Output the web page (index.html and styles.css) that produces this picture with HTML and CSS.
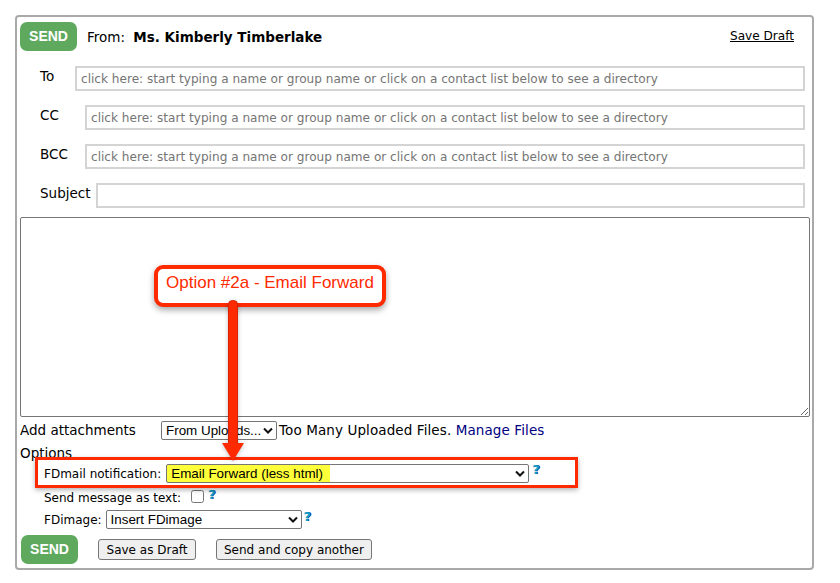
FILE: index.html
```html
<!DOCTYPE html>
<html lang="en">
<head>
<meta charset="utf-8">
<title>Compose</title>
<link rel="stylesheet" href="styles.css">
</head>
<body>
<form class="compose">
  <div class="top-row">
    <button type="button" class="send">SEND</button>
    <span class="from">From: <b>Ms. Kimberly Timberlake</b></span>
    <a class="save-link" href="#">Save Draft</a>
  </div>
  <div class="field field-to"><label>To</label><input type="text" placeholder="click here: start typing a name or group name or click on a contact list below to see a directory"></div>
  <div class="field field-cc"><label>CC</label><input type="text" placeholder="click here: start typing a name or group name or click on a contact list below to see a directory"></div>
  <div class="field field-cc"><label>BCC</label><input type="text" placeholder="click here: start typing a name or group name or click on a contact list below to see a directory"></div>
  <div class="field field-subject"><label>Subject</label><input type="text"></div>
  <textarea class="body-text"></textarea>
  <div class="attach-row">
    <span class="attach-label">Add attachments</span>
    <select class="sel sel-upload"><option>From Uploads...</option></select>
    <span class="attach-note">Too Many Uploaded Files. <a href="#">Manage Files</a></span>
  </div>
  <div class="options-title">Options</div>
  <div class="opt opt-notify">
    <span>FDmail notification:</span>
    <select class="sel sel-notify"><option>Email Forward (less html)</option></select>
    <span class="help help-notify">?</span>
  </div>
  <div class="opt opt-text">
    <span>Send message as text:</span>
    <input type="checkbox" class="check">
    <span class="help help-text">?</span>
  </div>
  <div class="opt opt-image">
    <span>FDimage:</span>
    <select class="sel sel-image"><option>Insert FDimage</option></select>
    <span class="help help-image">?</span>
  </div>
  <div class="bottom-row">
    <button type="button" class="send">SEND</button>
    <button type="button" class="plain plain-draft">Save as Draft</button>
    <button type="button" class="plain">Send and copy another</button>
  </div>
</form>

<div class="note-box"></div>
<div class="note-callout">Option #2a - Email Forward</div>
<svg class="note-arrow" width="40" height="170" viewBox="0 0 40 170" aria-hidden="true">
  <rect x="15.5" y="0.5" width="9" height="150" rx="4" fill="#ff2a00" stroke="#d82400" stroke-width="1"/>
  <path d="M9 143 L31 143 L20 161 Z" fill="#ff2a00"/>
</svg>
</body>
</html>
```
FILE: styles.css
```css
* { box-sizing: border-box; }
html, body { margin: 0; padding: 0; background: #fff; }
body {
  width: 840px;
  height: 583px;
  overflow: hidden;
  position: relative;
  font-family: "DejaVu Sans", Verdana, sans-serif;
  font-size: 14px;
  color: #000;
}
.compose {
  width: 799px;
  height: 555px;
  margin: 15px 0 0 15px;
  padding: 5px 3px 0 3px;
  border: 2px solid #a9a9a9;
  border-radius: 4px;
  display: flex;
  flex-direction: column;
  align-items: flex-start;
}
.top-row { display: flex; align-items: center; width: 774px; height: 29px; }
.send {
  width: 57px;
  height: 29px;
  padding: 0 0 1px;
  border: 0;
  border-radius: 7px;
  background: #5fa95f;
  color: #fff;
  font-family: "Liberation Sans", Arial, sans-serif;
  font-size: 14px;
  font-weight: 700;
}
.from { margin-left: 10px; font-size: 13.5px; }
.from b { margin-left: 4px; }
.save-link { margin-left: auto; padding-bottom: 2px; font-size: 12.1px; color: #000; }
.field { display: flex; align-items: flex-start; width: 785px; height: 25px; margin-top: 14px; padding-left: 20px; }
.field-to { margin-top: 15px; }
.field label { font-size: 13.5px; line-height: 20px; }
.field input {
  height: 25px;
  padding: 0 4px;
  border: 2px solid #d4d4d4;
  background: #fff;
  font-family: inherit;
  font-size: 12.1px;
  outline: 0;
}
.field input::placeholder { color: #757575; opacity: 1; }
.field-to input { width: 730px; margin-left: auto; }
.field-cc input { width: 720px; margin-left: auto; }
.field-subject input { width: 709px; margin-left: auto; }
.body-text {
  display: block;
  width: 790px;
  height: 200px;
  margin: 9px 0 0;
  border: 1px solid #767676;
  border-radius: 2px;
  resize: vertical;
  outline: 0;
}
.attach-row { display: flex; align-items: center; height: 19px; margin-top: 4px; white-space: nowrap; font-size: 13.5px; }
.attach-label { width: 141px; padding-bottom: 2px; }
.attach-note { margin-left: 2px; padding-bottom: 2px; letter-spacing: .1px; }
.attach-note a { color: #00007f; text-decoration: none; }
.sel {
  appearance: none;
  -webkit-appearance: none;
  height: 19px;
  padding: 0 0 0 4px;
  border: 1px solid #767676;
  border-radius: 2px;
  font-family: "Liberation Sans", Arial, sans-serif;
  font-size: 13.4px;
  line-height: 17px;
  color: #000;
  background-color: #fff;
  background-image: url("data:image/svg+xml,%3Csvg xmlns='http://www.w3.org/2000/svg' width='10' height='7'%3E%3Cpath d='M1 1.5L5 5.5L9 1.5' fill='none' stroke='%23111' stroke-width='2'/%3E%3C/svg%3E");
  background-repeat: no-repeat;
  background-position: right 3px center;
}
.sel-upload { width: 116px; }
.options-title { margin-top: 3px; height: 21px; line-height: 20px; font-size: 13.5px; }
.opt { display: flex; align-items: center; margin-left: 24px; white-space: nowrap; font-size: 12px; height: 19px; }
.opt-text { margin-top: 3px; height: 20px; }
.opt-image { margin-top: 4px; }
.opt-text span:first-child { padding-top: 4px; }
.sel-notify {
  width: 363px;
  margin-left: 5px;
  background-image:
    url("data:image/svg+xml,%3Csvg xmlns='http://www.w3.org/2000/svg' width='10' height='7'%3E%3Cpath d='M1 1.5L5 5.5L9 1.5' fill='none' stroke='%23111' stroke-width='2'/%3E%3C/svg%3E"),
    linear-gradient(#ffff3a, #ffff3a);
  background-position: right 3px center, 0 0;
  background-size: auto, 163px 100%;
}
.sel-image { width: 196px; margin-left: 4px; }
.check { width: 13px; height: 13px; margin: 0 0 0 10px; }
.help {
  align-self: flex-start;
  margin-left: 3px;
  font-family: "DejaVu Sans", sans-serif;
  font-size: 13px;
  font-weight: 700;
  line-height: 14px;
  color: #12a3c4;
  text-shadow: 1px 0 0 #2438a8;
}
.help-notify { margin-top: -1px; }
.help-text { margin-top: 2px; margin-left: 4px; }
.help-image { margin-top: 0; margin-left: 2px; }
.bottom-row { display: flex; align-items: center; height: 29px; margin-top: 6px; margin-left: 1px; }
.plain {
  height: 21px;
  padding: 0 7px;
  border: 1px solid #767676;
  border-radius: 3px;
  background: #efefef;
  color: #000;
  font-family: inherit;
  font-size: 12px;
}
.plain-draft { margin: 0 20px; width: 98px; }
.note-box {
  position: absolute;
  left: 35px;
  top: 457px;
  width: 543px;
  height: 31px;
  border: 3px solid #ff2a00;
  box-shadow: 0 2px 5px rgba(0,0,0,.3);
}
.note-arrow { position: absolute; left: 212.5px; top: 300px; filter: drop-shadow(0 1px 2px rgba(0,0,0,.25)); }
.note-callout {
  position: absolute;
  left: 154px;
  top: 265px;
  width: 232px;
  height: 42px;
  padding: 5px 0 0 8px;
  border: 4px solid #ff2a00;
  border-radius: 9px;
  background: #fff;
  box-shadow: 0 3px 6px rgba(0,0,0,.35);
  font-family: "Liberation Sans", Arial, sans-serif;
  font-size: 17px;
  line-height: 18px;
  color: #ff2a00;
  white-space: nowrap;
}
```
